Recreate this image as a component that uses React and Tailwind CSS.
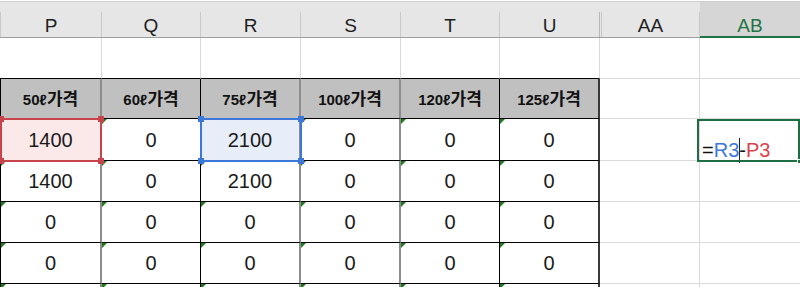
import React from "react";

const HEAD_W = ["w-[102px]", "w-[99px]", "w-[100px]", "w-[100px]", "w-[99px]", "w-[100px]", "w-[100px]", "w-[100px]"];
const LETTERS = ["P", "Q", "R", "S", "T", "U", "AA", "AB"];

const TABLE_CELL = [
  "w-[102px] border-l border-l-black border-r-2 border-r-[#8c8c8c] border-b border-b-black",
  "w-[99px] border-r border-r-black border-b border-b-black",
  "w-[100px] border-r-2 border-r-[#8c8c8c] border-b border-b-black",
  "w-[100px] border-r-2 border-r-[#8c8c8c] border-b border-b-black",
  "w-[99px] border-r border-r-black border-b border-b-black",
  "w-[100px] border-r-2 border-r-[#3a3a3a] border-b border-b-black",
];
const AA_CELL = "w-[100px] border-r border-r-[#dadada] border-b border-b-[#dadada]";
const AB_CELL = "w-[100px] border-b border-b-[#dadada]";

const ROW1_CELL = [
  "w-[102px] border-r border-r-[#dadada] border-b border-b-black",
  "w-[99px] border-r border-r-[#dadada] border-b border-b-black",
  "w-[100px] border-r border-r-[#dadada] border-b border-b-black",
  "w-[100px] border-r border-r-[#dadada] border-b border-b-black",
  "w-[99px] border-r border-r-[#dadada] border-b border-b-black",
  "w-[100px] border-r border-r-[#dadada] border-b border-b-black",
];

function Tri() {
  return (
    <div className="absolute left-0 top-0 w-0 h-0 border-t-[5px] border-t-[#1c7c1c] border-r-[5px] border-r-transparent" />
  );
}

function Divider() {
  return <div className="w-px h-[25px] self-end bg-[#c8c8c8] shrink-0" />;
}

function Header() {
  return (
    <div className="flex h-[37px] border-t border-t-[#cfcfcf] bg-[#e6e6e6]">
      {LETTERS.map((l, i) => {
        const isAB = l === "AB";
        return (
          <div
            key={l}
            className={
              HEAD_W[i] +
              " flex h-full " +
              (isAB
                ? "bg-[#d6d6d6] border-b-2 border-b-[#217346]"
                : "border-b border-b-[#9e9e9e]")
            }
          >
            {i === 0 && <Divider />}
            {l === "AA" && <div className="w-px shrink-0" />}
            {l === "AA" && <Divider />}
            <div
              className={
                "flex-1 text-center text-[19px] leading-none pt-[14px] " +
                (isAB ? "text-[#217346]" : "text-[#1e1e1e]")
              }
            >
              {l}
            </div>
            {!isAB && l !== "AA" && i !== 5 && <Divider />}
            {i === 5 && <div className="w-px h-[25px] self-end bg-[#b8b8b8] shrink-0" />}
            {l === "AA" && <Divider />}
          </div>
        );
      })}
    </div>
  );
}

function Label({ n }) {
  return (
    <span className="font-bold text-[#111]">
      <span className="text-[15px]">{n}ℓ</span>
      <span className="text-[17px] font-['Noto_Sans_CJK_KR',sans-serif]">가격</span>
    </span>
  );
}

function DataRow({ h, values, tris }) {
  return (
    <div className={"flex " + h}>
      {TABLE_CELL.map((c, i) => (
        <div
          key={i}
          className={
            c +
            " relative h-full flex items-center justify-center text-[20px] leading-none text-[#1a1a1a] bg-white"
          }
        >
          {tris[i] && <Tri />}
          {values[i]}
        </div>
      ))}
      <div className={AA_CELL + " h-full"} />
      <div className={AB_CELL + " h-full"} />
    </div>
  );
}

export default function App() {
  const all = [true, true, true, true, true, true];
  return (
    <div className="relative w-[800px] h-[287px] overflow-hidden bg-white font-['Liberation_Sans',Arial,sans-serif]">
      <div className="h-px" />
      <Header />

      {/* row 1: empty */}
      <div className="flex h-[41px]">
        {ROW1_CELL.map((c, i) => (
          <div key={i} className={c + " h-full"} />
        ))}
        <div className={AA_CELL + " h-full"} />
        <div className={AB_CELL + " h-full"} />
      </div>

      {/* row 2: labels */}
      <div className="flex h-[40px]">
        {["50", "60", "75", "100", "120", "125"].map((n, i) => (
          <div
            key={n}
            className={TABLE_CELL[i] + " h-full bg-[#c0c0c0] flex items-center justify-center leading-none"}
          >
            <Label n={n} />
          </div>
        ))}
        <div className={AA_CELL + " h-full"} />
        <div className={AB_CELL + " h-full"} />
      </div>

      {/* row 3 */}
      <div className="flex h-[42px]">
        {TABLE_CELL.map((c, i) => (
          <div
            key={i}
            className={
              c +
              " relative h-full flex items-center justify-center text-[20px] leading-none text-[#1a1a1a] " +
              (i === 0 ? "bg-[#fbe9ea]" : i === 2 ? "bg-[#e7eef9]" : "bg-white")
            }
          >
            {(i === 1 || i >= 3) && <Tri />}
            {["1400", "0", "2100", "0", "0", "0"][i]}
          </div>
        ))}
        <div className={AA_CELL + " h-full"} />
        <div className={AB_CELL + " h-full flex items-end pl-[2px] text-[20px] leading-none whitespace-nowrap"}>
          <span className="text-[#111]">=</span>
          <span className="text-[#3b78d8]">R3</span>
          <span className="relative inline-block w-0 h-[20px]">
            <span className="absolute left-0 bottom-[-3px] w-px h-[25px] bg-[#222]" />
          </span>
          <span className="text-[#111]">-</span>
          <span className="text-[#d9434e]">P3</span>
        </div>
      </div>

      <DataRow h="h-[41px]" values={["1400", "0", "2100", "0", "0", "0"]} tris={all} />
      <DataRow h="h-[41px]" values={["0", "0", "0", "0", "0", "0"]} tris={all} />
      <DataRow h="h-[41px]" values={["0", "0", "0", "0", "0", "0"]} tris={all} />
      <DataRow h="h-[41px]" values={["", "", "", "", "", ""]} tris={all} />

      {/* selection overlays */}
      <div className="absolute left-0 top-[118px] w-[102px] h-[44px] border-2 border-[#c8434c]">
        <div className="absolute -left-[4px] -top-[4px] w-[6px] h-[6px] bg-[#c8434c]" />
        <div className="absolute -right-[4px] -top-[4px] w-[6px] h-[6px] bg-[#c8434c]" />
        <div className="absolute -left-[4px] -bottom-[4px] w-[6px] h-[6px] bg-[#c8434c]" />
        <div className="absolute -right-[4px] -bottom-[4px] w-[6px] h-[6px] bg-[#c8434c]" />
      </div>
      <div className="absolute left-[200px] top-[118px] w-[102px] h-[44px] border-2 border-[#3b78d8]">
        <div className="absolute -left-[4px] -top-[4px] w-[6px] h-[6px] bg-[#3b78d8]" />
        <div className="absolute -right-[4px] -top-[4px] w-[6px] h-[6px] bg-[#3b78d8]" />
        <div className="absolute -left-[4px] -bottom-[4px] w-[6px] h-[6px] bg-[#3b78d8]" />
        <div className="absolute -right-[4px] -bottom-[4px] w-[6px] h-[6px] bg-[#3b78d8]" />
      </div>
      <div className="absolute left-[697px] top-[119px] w-[103px] h-[43px] border-2 border-[#1f6e43]">
        <div className="absolute -right-[4px] -bottom-[4px] w-[5px] h-[5px] bg-[#1f6e43] border border-white" />
      </div>
    </div>
  );
}
